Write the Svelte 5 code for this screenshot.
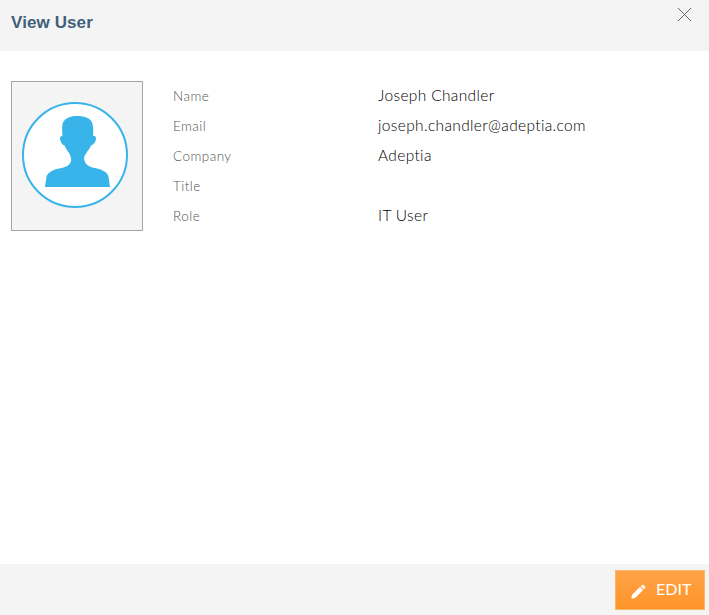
<script>
  const rows = [
    ['Name', 'Joseph Chandler'],
    ['Email', 'joseph.chandler@adeptia.com'],
    ['Company', 'Adeptia'],
    ['Title', ''],
    ['Role', 'IT User']
  ];
</script>

<div class="dialog">
  <header>
    <h1>View User</h1>
    <button class="close" aria-label="Close">
      <svg width="15" height="15" viewBox="0 0 15 15"><path d="M1 1L14 14M14 1L1 14" stroke="#666" stroke-width="1" fill="none"/></svg>
    </button>
  </header>
  <main>
    <div class="avatar">
      <svg width="130" height="148" viewBox="12 82 130 148">
        <circle cx="75" cy="155" r="52" fill="#fff" stroke="#38b4ea" stroke-width="2"/>
        <path fill="#38b4ea" d="M45 187L46.500 176.500C47.500 173 52 170.500 57 169C63 167.500 69 167 71 161.500C71.500 158.500 70.500 155.500 69 153C67 150 65.500 148 64.500 145.500C62 145 60 141 60 138C60 136.500 61.500 136 62.500 136C62 131 62 127 62.500 124C64 118.500 70 116 77 116C85 116 91.500 118.500 92.500 124C93.500 128 93.500 132 93 136C94.500 135.500 96 136.500 96 138.500C96 141.500 93.500 145 91 145.500C90 148.500 87.500 151 86 153.500C84 156 83.500 159 85 162C87 166.500 92 167.500 97 168.500C103 170 108 172.500 108.500 177L110 187Z"/>
      </svg>
    </div>
    <dl>
      {#each rows as [label, value]}
        <div class="row">
          <dt>{label}</dt>
          <dd>{value}</dd>
        </div>
      {/each}
    </dl>
  </main>
  <footer>
    <button class="edit">
      <svg width="15" height="15" viewBox="0 0 16 16"><path fill="#fff" d="M11.500 1.200C12.200.6 13 .6 13.600 1.200L14.800 2.400C15.400 3 15.400 3.800 14.800 4.500L13.600 5.700L10.300 2.400ZM9.500 3.200L12.800 6.500L5.500 13.800C4.500 14.800 2.500 15.500 1 15.500C.6 15.500.5 15.300.5 15C.5 13.500 1.200 11.500 2.200 10.500Z"/></svg>
      <span>EDIT</span>
    </button>
  </footer>
</div>

<style>
  :global(body) { margin: 0; background: #fff; }
  .dialog {
    width: 709px;
    height: 615px;
    display: flex;
    flex-direction: column;
    font-family: "Lato", "Open Sans", sans-serif;
    color: #333;
    overflow: hidden;
  }
  header {
    height: 51px;
    flex: none;
    background: #f4f4f4;
    display: flex;
    justify-content: space-between;
    padding: 0 17px 0 11px;
    box-sizing: border-box;
  }
  h1 {
    margin: 14px 0 0;
    font: bold 17px/18px "Liberation Sans", Arial, sans-serif;
    letter-spacing: 0.100px;
    color: #41607a;
  }
  .close {
    border: 0;
    background: none;
    padding: 0;
    margin: 7px 0 0;
    width: 15px;
    height: 15px;
    display: flex;
  }
  main {
    flex: 1;
    display: flex;
    align-items: flex-start;
    padding: 30px 0 0 11px;
  }
  .avatar {
    width: 130px;
    height: 148px;
    border: 1px solid #a6a6a6;
    background: #f4f4f4;
    flex: none;
    display: flex;
  }
  dl {
    margin: 0 0 0 30px;
    padding: 0;
  }
  .row {
    display: flex;
    height: 30px;
    align-items: center;
  }
  dt {
    width: 205px;
    font-size: 13.500px;
    font-weight: 300;
    letter-spacing: 0.450px;
    color: #555;
  }
  dd {
    margin: 0;
    font-size: 15.500px;
    font-weight: 300;
    letter-spacing: 0.350px;
    color: #000;
    position: relative;
    top: -1px;
  }
  footer {
    height: 51px;
    flex: none;
    background: #f4f4f4;
    display: flex;
    justify-content: flex-end;
    align-items: flex-start;
    padding: 6px 4px 0 0;
    box-sizing: border-box;
  }
  .edit {
    width: 90px;
    height: 40px;
    box-sizing: border-box;
    border: 1px solid #ffb566;
    background: linear-gradient(#ffa347, #ff9429);
    color: #fff;
    font: 400 16px "Lato", sans-serif;
    display: flex;
    align-items: center;
    padding: 0 0 0 15px;
    gap: 10px;
  }
  .edit svg { margin-top: 2px; }
  .edit span { position: relative; top: -2px; }
</style>
